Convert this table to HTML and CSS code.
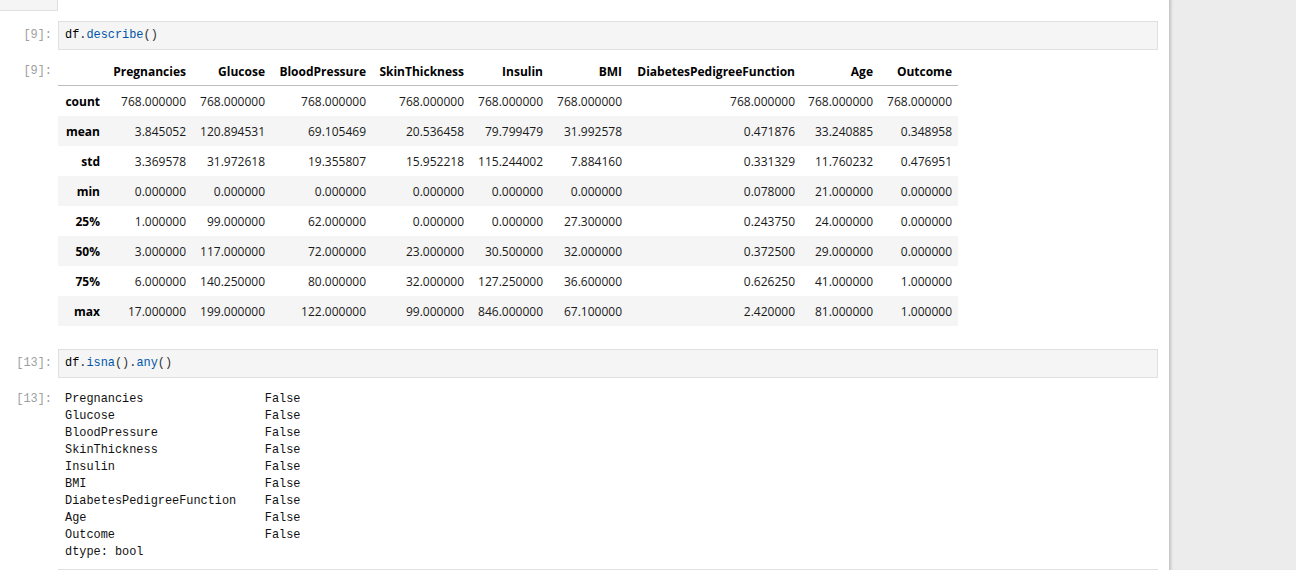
FILE: index.html
```html
<!DOCTYPE html>
<html>
<head>
<meta charset="utf-8">
<link rel="stylesheet" href="styles.css">
</head>
<body>
<div class="page">
  <div class="notebook">
    <div class="prev-box"></div>

    <div class="cell first">
      <div class="prompt">[9]:</div>
      <div class="input"><span class="v">df</span><span class="op">.</span><span class="p">describe</span><span class="b">()</span></div>
    </div>
    <div class="cell out-table">
      <div class="prompt out-prompt">[9]:</div>
      <div class="output">
        <table class="dataframe">
          <thead>
            <tr><th></th><th>Pregnancies</th><th>Glucose</th><th>BloodPressure</th><th>SkinThickness</th><th>Insulin</th><th>BMI</th><th>DiabetesPedigreeFunction</th><th>Age</th><th>Outcome</th></tr>
          </thead>
          <tbody>
            <tr><th>count</th><td>768.000000</td><td>768.000000</td><td>768.000000</td><td>768.000000</td><td>768.000000</td><td>768.000000</td><td>768.000000</td><td>768.000000</td><td>768.000000</td></tr>
            <tr><th>mean</th><td>3.845052</td><td>120.894531</td><td>69.105469</td><td>20.536458</td><td>79.799479</td><td>31.992578</td><td>0.471876</td><td>33.240885</td><td>0.348958</td></tr>
            <tr><th>std</th><td>3.369578</td><td>31.972618</td><td>19.355807</td><td>15.952218</td><td>115.244002</td><td>7.884160</td><td>0.331329</td><td>11.760232</td><td>0.476951</td></tr>
            <tr><th>min</th><td>0.000000</td><td>0.000000</td><td>0.000000</td><td>0.000000</td><td>0.000000</td><td>0.000000</td><td>0.078000</td><td>21.000000</td><td>0.000000</td></tr>
            <tr><th>25%</th><td>1.000000</td><td>99.000000</td><td>62.000000</td><td>0.000000</td><td>0.000000</td><td>27.300000</td><td>0.243750</td><td>24.000000</td><td>0.000000</td></tr>
            <tr><th>50%</th><td>3.000000</td><td>117.000000</td><td>72.000000</td><td>23.000000</td><td>30.500000</td><td>32.000000</td><td>0.372500</td><td>29.000000</td><td>0.000000</td></tr>
            <tr><th>75%</th><td>6.000000</td><td>140.250000</td><td>80.000000</td><td>32.000000</td><td>127.250000</td><td>36.600000</td><td>0.626250</td><td>41.000000</td><td>1.000000</td></tr>
            <tr><th>max</th><td>17.000000</td><td>199.000000</td><td>122.000000</td><td>99.000000</td><td>846.000000</td><td>67.100000</td><td>2.420000</td><td>81.000000</td><td>1.000000</td></tr>
          </tbody>
        </table>
      </div>
    </div>

    <div class="cell second">
      <div class="prompt">[13]:</div>
      <div class="input"><span class="v">df</span><span class="op">.</span><span class="p">isna</span><span class="b">()</span><span class="op">.</span><span class="p">any</span><span class="b">()</span></div>
    </div>
    <div class="cell out-text">
      <div class="prompt out-prompt">[13]:</div>
      <pre class="stream">Pregnancies                 False
Glucose                     False
BloodPressure               False
SkinThickness               False
Insulin                     False
BMI                         False
DiabetesPedigreeFunction    False
Age                         False
Outcome                     False
dtype: bool</pre>
    </div>

    <div class="cell next">
      <div class="prompt"></div>
      <div class="input empty"></div>
    </div>
  </div>
  <div class="sidebar"></div>
</div>
</body>
</html>
```

FILE: styles.css
```css
html, body {
  margin: 0;
  padding: 0;
  height: 100%;
  overflow: hidden;
}

body {
  background: #ececec;
  font-family: "Open Sans", "Noto Sans", sans-serif;
}

.page {
  display: flex;
  height: 570px;
}

.notebook {
  width: 1169px;
  flex: none;
  background: #fff;
  padding-right: 11px;
  box-sizing: border-box;
  overflow: hidden;
}

.sidebar {
  flex: 1;
  background: #ececec;
  box-shadow: inset 4px 0 3px -2px rgba(0, 0, 0, 0.18);
}

.prev-box {
  width: 57px;
  height: 10px;
  background: #f5f5f5;
  border-right: 1px solid #e0e0e0;
  border-bottom: 1px solid #e0e0e0;
  box-sizing: content-box;
}

.cell {
  display: flex;
  align-items: flex-start;
}

.prompt {
  width: 58px;
  flex: none;
  box-sizing: border-box;
  padding-right: 6px;
  text-align: right;
  font-family: "Liberation Mono", "DejaVu Sans Mono", monospace;
  font-size: 11.9px;
  line-height: 17px;
  color: #9e9e9e;
}

.input {
  flex: 1;
  background: #f5f5f5;
  border: 1px solid #e0e0e0;
  padding: 5px 6px;
  font-family: "Liberation Mono", "DejaVu Sans Mono", monospace;
  font-size: 11.9px;
  line-height: 17px;
  color: #000;
  white-space: pre;
}

.first {
  margin-top: 10px;
}

.first .prompt,
.second .prompt {
  padding-top: 6px;
}

.input .v { color: #000; }
.input .op { color: #333; }
.input .p { color: #0055aa; }
.input .b { color: #333; }

.out-table {
  margin-top: 8px;
}

.out-table .out-prompt {
  padding-top: 5px;
}

.output {
  flex: 1;
}

table.dataframe {
  border-collapse: collapse;
  border-spacing: 0;
  table-layout: fixed;
  font-size: 12px;
  color: #1a1a1a;
}

table.dataframe th,
table.dataframe td {
  padding: 7px 6px 5px;
  line-height: 18px;
  text-align: right;
  white-space: nowrap;
  box-sizing: border-box;
}

table.dataframe thead th {
  padding: 5px 6px 5px;
  line-height: 17px;
  font-weight: bold;
  color: #000;
  border-bottom: 1px solid #bdbdbd;
}

table.dataframe tbody th {
  font-weight: bold;
  color: #000;
}

table.dataframe tbody tr:nth-child(even) {
  background: #f5f5f5;
}

table.dataframe th:nth-child(1) { width: 48px; }
table.dataframe thead th:nth-child(2) { width: 86px; }
table.dataframe thead th:nth-child(3) { width: 79px; }
table.dataframe thead th:nth-child(4) { width: 101px; }
table.dataframe thead th:nth-child(5) { width: 98px; }
table.dataframe thead th:nth-child(6) { width: 79px; }
table.dataframe thead th:nth-child(7) { width: 79px; }
table.dataframe thead th:nth-child(8) { width: 173px; }
table.dataframe thead th:nth-child(9) { width: 78px; }
table.dataframe thead th:nth-child(10) { width: 79px; }

.second {
  margin-top: 23px;
}

.out-text {
  margin-top: 13px;
}

.out-text .out-prompt {
  padding-top: 0;
}

.stream {
  flex: 1;
  margin: 0;
  padding: 0 7px;
  font-family: "Liberation Mono", "DejaVu Sans Mono", monospace;
  font-size: 11.9px;
  line-height: 17px;
  color: #111;
}

.next {
  margin-top: 8px;
}

.input.empty {
  height: 40px;
}
```
